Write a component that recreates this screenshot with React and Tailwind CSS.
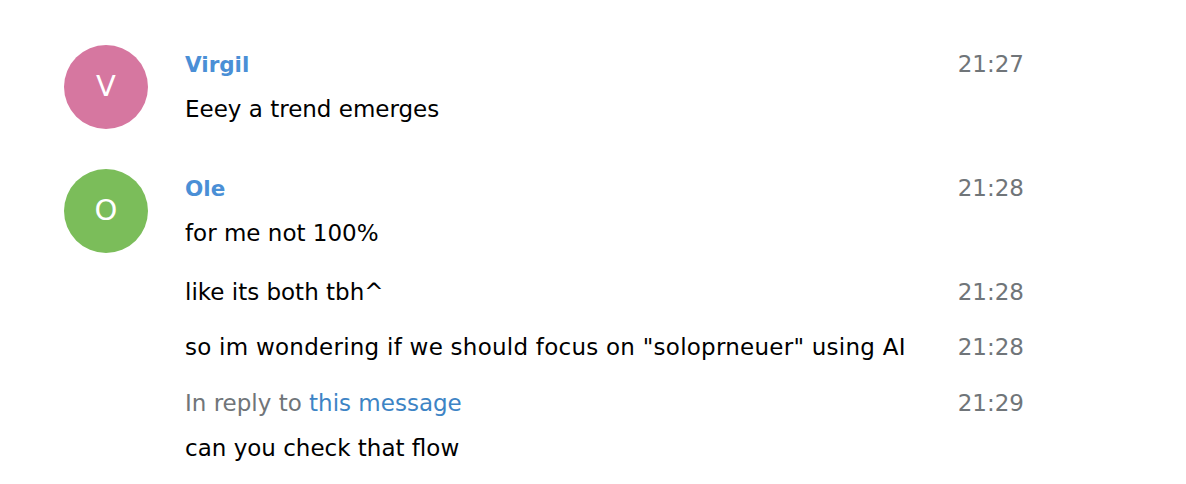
const font = { fontFamily: '"DejaVu Sans", Verdana, sans-serif' };

const Avatar = ({ letter, color }) => (
  <div
    className={`w-[84px] h-[84px] rounded-full flex items-center justify-center text-white text-[29px] shrink-0 mt-[3px] ${color}`}
  >
    {letter}
  </div>
);

const Row = ({ children, time, className = "" }) => (
  <div className={`flex justify-between items-center h-[45px] ${className}`}>
    <div className="text-[23px] text-black">{children}</div>
    {time && <div className="text-[23px] text-[#707579]">{time}</div>}
  </div>
);

const Group = ({ letter, color, children, className = "" }) => (
  <div className={`flex gap-[37px] ${className}`}>
    <Avatar letter={letter} color={color} />
    <div className="flex-1">{children}</div>
  </div>
);

export default function App() {
  return (
    <div
      className="w-[1186px] h-[484px] bg-white pl-[64px] pr-[162px] pt-[42px] overflow-hidden"
      style={font}
    >
      <Group letter="V" color="bg-[#d677a0]">
        <Row time="21:27">
          <span className="font-bold text-[21.5px] text-[#4a8fd6]">Virgil</span>
        </Row>
        <Row>Eeey a trend emerges</Row>
      </Group>

      <Group letter="O" color="bg-[#7bbd5a]" className="mt-[34px]">
        <Row time="21:28">
          <span className="font-bold text-[21.5px] text-[#4a8fd6]">Ole</span>
        </Row>
        <Row>for me not 100%</Row>
        <Row time="21:28" className="mt-[14px]">
          like its both tbh^
        </Row>
        <Row time="21:28" className="mt-[10px]">
          <span className="tracking-[0.25px]">
            so im wondering if we should focus on "soloprneuer" using AI
          </span>
        </Row>
        <Row time="21:29" className="mt-[11px]">
          <span className="text-[#707579]">In reply to </span>
          <span className="text-[#3d84c5]">this message</span>
        </Row>
        <Row>can you check that flow</Row>
      </Group>
    </div>
  );
}
